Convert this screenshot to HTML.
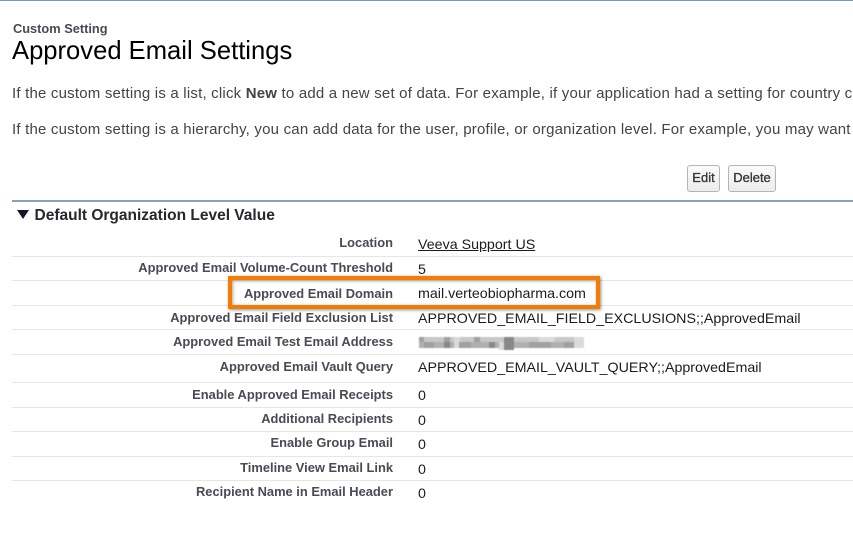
<!DOCTYPE html>
<html><head><meta charset="utf-8">
<style>
html,body{margin:0;padding:0;background:#fff;overflow:hidden}
body{width:853px;height:537px;position:relative;overflow:hidden;font-family:"Liberation Sans",Arial,sans-serif}
.t{position:absolute;white-space:nowrap;line-height:16px}
.p{left:12px;width:841px;overflow:hidden;font-size:15px;letter-spacing:.2px;color:#444;height:18px}
.l{right:460px;font-weight:bold;font-size:12.9px;color:#4a4a56;text-align:right}
.v{left:418px;font-size:14.25px;color:#1c1c1c}
.r{position:absolute;left:12px;right:0;height:1px;background:#e6e6e6}
.b{position:absolute;top:165px;height:27px;box-sizing:border-box;border:1px solid #b5b5b5;border-radius:3px;background:linear-gradient(#fafafa,#ececec);font-size:13px;color:#333;text-align:center;line-height:24px;-webkit-text-stroke:.3px #333}
</style></head><body>
<div style="position:absolute;left:0;top:0;width:853px;height:1px;background:#6a9ad0"></div>
<div class="t" style="left:13px;top:21px;font-size:12.8px;font-weight:bold;color:#4a4a56">Custom Setting</div>
<div class="t" style="left:12px;top:36px;font-size:25.6px;line-height:30px;color:#000">Approved Email Settings</div>
<div class="t p" style="top:86px">If the custom setting is a list, click <b>New</b> to add a new set of data. For example, if your application had a setting for country codes</div>
<div class="t p" style="top:122px">If the custom setting is a hierarchy, you can add data for the user, profile, or organization level. For example, you may want different values</div>
<div class="b" style="left:687px;width:33px">Edit</div>
<div class="b" style="left:728px;width:48px">Delete</div>
<div style="position:absolute;left:12px;right:0;top:200px;height:2px;background:#8e9dbe"></div>
<svg style="position:absolute;left:16px;top:209px" width="14" height="11"><path d="M1 1H13L7 10Z" fill="#16162a"/></svg>
<div class="t" style="left:34.5px;top:208px;font-size:15.5px;font-weight:bold;color:#27282e">Default Organization Level Value</div>

<div class="r" style="top:256px"></div><div class="r" style="top:280px"></div><div class="r" style="top:305px"></div><div class="r" style="top:329px"></div><div class="r" style="top:354px"></div><div class="r" style="top:382px"></div><div class="r" style="top:407px"></div><div class="r" style="top:431px"></div><div class="r" style="top:456px"></div><div class="r" style="top:480px"></div>

<div class="t l" style="top:235px">Location</div><div class="t v" style="top:237px;text-decoration:underline">Veeva Support US</div>
<div class="t l" style="top:260px">Approved Email Volume-Count Threshold</div><div class="t v" style="top:262px">5</div>
<div class="t l" style="top:286px">Approved Email Domain</div><div class="t v" style="top:286px">mail.verteobiopharma.com</div>
<div class="t l" style="top:310px">Approved Email Field Exclusion List</div><div class="t v" style="top:311px">APPROVED_EMAIL_FIELD_EXCLUSIONS;;ApprovedEmail</div>
<div class="t l" style="top:334px">Approved Email Test Email Address</div>
<svg style="position:absolute;left:419px;top:337px;filter:blur(.4px)" width="166" height="14" shape-rendering="crispEdges">
<rect width="165" height="5" fill="#c8c8c8"/><rect y="5" width="165" height="6" fill="#b0b0b0"/>
<g fill="#a0a0a0"><rect y="0" width="5" height="5"/><rect x="5" y="5" width="10" height="6"/><rect x="25" y="0" width="6" height="5"/><rect x="40" y="5" width="12" height="6"/><rect x="55" y="0" width="6" height="5"/><rect x="110" y="5" width="10" height="6"/><rect x="120" y="5" width="12" height="6"/><rect x="145" y="5" width="10" height="6"/></g>
<g fill="#888"><rect x="25" y="5" width="6" height="6"/><rect x="70" y="5" width="6" height="6"/><rect x="85" y="0" width="10" height="13"/></g>
<g fill="#dadada"><rect x="35" y="5" width="5" height="6"/><rect x="35" y="0" width="6" height="5"/><rect x="80" y="5" width="5" height="8"/><rect x="120" y="0" width="16" height="5"/><rect x="155" y="0" width="10" height="11"/></g>
</svg>
<div class="t l" style="top:359px">Approved Email Vault Query</div><div class="t v" style="top:360px">APPROVED_EMAIL_VAULT_QUERY;;ApprovedEmail</div>
<div class="t l" style="top:387px">Enable Approved Email Receipts</div><div class="t v" style="top:388px">0</div>
<div class="t l" style="top:411px">Additional Recipients</div><div class="t v" style="top:413px">0</div>
<div class="t l" style="top:435px">Enable Group Email</div><div class="t v" style="top:437px">0</div>
<div class="t l" style="top:460px">Timeline View Email Link</div><div class="t v" style="top:462px">0</div>
<div class="t l" style="top:484px">Recipient Name in Email Header</div><div class="t v" style="top:486px">0</div>

<div style="position:absolute;left:228px;top:276px;width:372px;height:33px;box-sizing:border-box;border:4px solid #f57c00;box-shadow:1px 1px 3px rgba(0,0,0,.45),inset 1px 1px 3px rgba(0,0,0,.35)"></div>
</body></html>
